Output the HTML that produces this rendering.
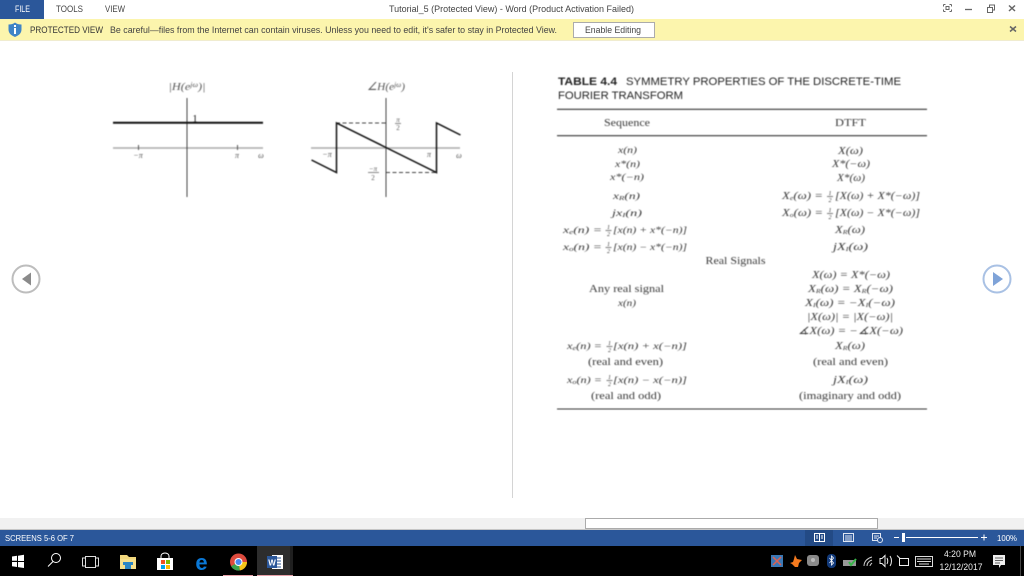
<!DOCTYPE html>
<html><head><meta charset="utf-8"><style>
html,body{margin:0;padding:0;width:1024px;height:576px;overflow:hidden;background:#fff}
svg{display:block;position:absolute;left:0;top:0}
text{font-family:"Liberation Sans",sans-serif}
.ui{font-size:9px;fill:#444}
.w{fill:#fff;font-size:8px}
.doc text{font-family:"Liberation Serif",serif;fill:#383838}
.doc{filter:blur(.5px)}
.m{font-style:italic;font-size:9px}
.r{font-size:11px}
.f{font-size:6px;text-anchor:middle;font-style:italic}
.dg text{font-family:"Liberation Serif",serif;fill:#555}
.dg{filter:blur(.4px)}
</style></head><body>
<svg width="1024" height="576" viewBox="0 0 1024 576" xmlns="http://www.w3.org/2000/svg">
<rect width="1024" height="576" fill="#fff"/>
<rect x="0" y="0" width="44" height="19" fill="#2b579a"/>
<text x="15" y="12" class="ui" style="fill:#fff" textLength="15" lengthAdjust="spacingAndGlyphs">FILE</text>
<text x="56" y="12" class="ui" textLength="27" lengthAdjust="spacingAndGlyphs">TOOLS</text>
<text x="105" y="12" class="ui" textLength="20" lengthAdjust="spacingAndGlyphs">VIEW</text>
<text x="389" y="12" class="ui" textLength="245" lengthAdjust="spacingAndGlyphs">Tutorial_5 (Protected View) - Word (Product Activation Failed)</text>
<g stroke="#666" fill="none">
<path d="M943.500 4.500v2M943.500 4.500h2M951.500 4.500h-2M951.500 4.500v2M943.500 11.500h2M943.500 11.500v-2M951.500 11.500h-2M951.500 11.500v-2M946 6.500h3v3h-3z"/>
<path d="M965 9.500h7" stroke-width="1.300"/>
<path d="M987.500 7.500h5v5h-5zM989.500 7.500v-2.500h5v5h-2"/>
<path d="M1009 5.500l6 5.500M1015 5.500l-6 5.500" stroke-width="1.500"/>
</g>
<rect x="0" y="19" width="1024" height="21" fill="#fcf5ad"/>
<rect x="0" y="40" width="1024" height="1" fill="#f0ecd0"/>
<path d="M15 22.500c2 1.500 4 2 6.500 2v5c0 4-3 6-6.500 7.500-3.500-1.500-6.500-3.500-6.500-7.500v-5c2.500 0 4.500-.5 6.500-2z" fill="#3f84c6"/>
<rect x="14" y="28" width="2" height="6" fill="#fff"/><rect x="14" y="25" width="2" height="2" fill="#fff"/>
<text x="30" y="33" class="ui" style="fill:#333" textLength="73" lengthAdjust="spacingAndGlyphs">PROTECTED VIEW</text>
<text x="110" y="33" class="ui" style="fill:#444" textLength="447" lengthAdjust="spacingAndGlyphs">Be careful—files from the Internet can contain viruses. Unless you need to edit, it's safer to stay in Protected View.</text>
<rect x="573.500" y="22.500" width="81" height="15" fill="#fff" stroke="#ababab"/>
<text x="585" y="33" class="ui" textLength="56" lengthAdjust="spacingAndGlyphs">Enable Editing</text>
<path d="M1010 26.500l6 5M1016 26.500l-6 5" stroke="#666" stroke-width="1.500"/>

<rect x="512" y="72" width="1" height="426" fill="#d4d4d4"/>

<g class="dg">
<text x="187" y="90" text-anchor="middle" font-size="11" font-style="italic" textLength="37" lengthAdjust="spacingAndGlyphs">|H(e<tspan font-size="7" dy="-3">jω</tspan><tspan dy="3">)|</tspan></text>
<path d="M113 148h150" stroke="#aaa" stroke-width="1.500"/>
<path d="M187 98v99" stroke="#444" stroke-width="1"/>
<path d="M113 122.700h150" stroke="#111" stroke-width="2"/>
<path d="M138.500 145v5M237.500 145v5" stroke="#555"/>
<text x="195" y="122" font-size="11" text-anchor="middle" style="fill:#222">1</text>
<text x="138" y="158" font-size="8" text-anchor="middle" font-style="italic">−π</text>
<text x="237" y="158" font-size="8" text-anchor="middle" font-style="italic">π</text>
<text x="261" y="158" font-size="8" text-anchor="middle" font-style="italic">ω</text>

<text x="386" y="90" text-anchor="middle" font-size="11" font-style="italic" textLength="38" lengthAdjust="spacingAndGlyphs">∠H(e<tspan font-size="7" dy="-3">jω</tspan><tspan dy="3">)</tspan></text>
<path d="M311 148h149" stroke="#aaa" stroke-width="1.500"/>
<path d="M386 98v99" stroke="#444" stroke-width="1"/>
<path d="M336 123h50M386 172.500h50" stroke="#444" stroke-dasharray="4 2.500" fill="none"/>
<path d="M311.500 160l25 12.500v-49.500l100 49.500v-49.500l24 12" stroke="#111" stroke-width="1.500" fill="none"/>
<text x="327" y="157" font-size="8" text-anchor="middle" font-style="italic">−π</text>
<text x="429" y="157" font-size="8" text-anchor="middle" font-style="italic">π</text>
<text x="459" y="158" font-size="8" text-anchor="middle" font-style="italic">ω</text>
<text x="398" y="122" font-size="7" text-anchor="middle" font-style="italic">π</text>
<path d="M395 123.500h6" stroke="#555" stroke-width=".7"/>
<text x="398" y="130" font-size="7" text-anchor="middle">2</text>
<text x="373" y="171" font-size="7" text-anchor="middle" font-style="italic">−π</text>
<path d="M368 172.500h11" stroke="#555" stroke-width=".7"/>
<text x="373" y="180" font-size="7" text-anchor="middle">2</text>
</g>

<g class="doc">
<text x="558" y="85" style="font-family:'Liberation Sans',sans-serif;font-size:11px;fill:#222;font-weight:bold" textLength="59" lengthAdjust="spacingAndGlyphs">TABLE 4.4</text>
<text x="626" y="85" style="font-family:'Liberation Sans',sans-serif;font-size:11px;fill:#222" textLength="275" lengthAdjust="spacingAndGlyphs">SYMMETRY PROPERTIES OF THE DISCRETE-TIME</text>
<text x="558" y="99" style="font-family:'Liberation Sans',sans-serif;font-size:11px;fill:#222" textLength="125" lengthAdjust="spacingAndGlyphs">FOURIER TRANSFORM</text>
<path d="M557 109.300h370M557 135.700h370M557 409h370" stroke="#333" stroke-width="1.100" fill="none"/>
<text x="604" y="126" class="r" textLength="46" lengthAdjust="spacingAndGlyphs">Sequence</text>
<text x="835" y="126" class="r" textLength="31" lengthAdjust="spacingAndGlyphs">DTFT</text>

<text x="618" y="153" class="m" textLength="19" lengthAdjust="spacingAndGlyphs">x(n)</text>
<text x="615" y="167" class="m" textLength="25" lengthAdjust="spacingAndGlyphs">x*(n)</text>
<text x="610" y="180" class="m" textLength="34" lengthAdjust="spacingAndGlyphs">x*(−n)</text>
<text x="613" y="199" class="m" textLength="27" lengthAdjust="spacingAndGlyphs">x<tspan font-size="6" dy="1">R</tspan><tspan dy="-1">(n)</tspan></text>
<text x="612" y="216" class="m" textLength="30" lengthAdjust="spacingAndGlyphs">jx<tspan font-size="6" dy="1">I</tspan><tspan dy="-1">(n)</tspan></text>

<text x="563" y="233" class="m" textLength="39" lengthAdjust="spacingAndGlyphs">x<tspan font-size="6" dy="1">e</tspan><tspan dy="-1">(n) =</tspan></text>
<text x="608.500" y="229" class="f">1</text><path d="M605.500 230.500h6" stroke="#444" stroke-width=".7"/><text x="608.500" y="236" class="f">2</text>
<text x="613" y="233" class="m" textLength="74" lengthAdjust="spacingAndGlyphs">[x(n) + x*(−n)]</text>

<text x="563" y="250" class="m" textLength="39" lengthAdjust="spacingAndGlyphs">x<tspan font-size="6" dy="1">o</tspan><tspan dy="-1">(n) =</tspan></text>
<text x="608.500" y="246" class="f">1</text><path d="M605.500 247.500h6" stroke="#444" stroke-width=".7"/><text x="608.500" y="253" class="f">2</text>
<text x="613" y="250" class="m" textLength="74" lengthAdjust="spacingAndGlyphs">[x(n) − x*(−n)]</text>

<text x="838" y="154" class="m" style="font-size:10px" textLength="25" lengthAdjust="spacingAndGlyphs">X(ω)</text>
<text x="832" y="167" class="m" style="font-size:10px" textLength="38" lengthAdjust="spacingAndGlyphs">X*(−ω)</text>
<text x="837" y="181" class="m" style="font-size:10px" textLength="28" lengthAdjust="spacingAndGlyphs">X*(ω)</text>

<text x="782" y="199" class="m" style="font-size:10px" textLength="41" lengthAdjust="spacingAndGlyphs">X<tspan font-size="6" dy="1">e</tspan><tspan dy="-1">(ω) =</tspan></text>
<text x="830" y="195" class="f">1</text><path d="M827 196.500h6" stroke="#444" stroke-width=".7"/><text x="830" y="202" class="f">2</text>
<text x="835" y="199" class="m" style="font-size:10px" textLength="85" lengthAdjust="spacingAndGlyphs">[X(ω) + X*(−ω)]</text>

<text x="782" y="216" class="m" style="font-size:10px" textLength="41" lengthAdjust="spacingAndGlyphs">X<tspan font-size="6" dy="1">o</tspan><tspan dy="-1">(ω) =</tspan></text>
<text x="830" y="212" class="f">1</text><path d="M827 213.500h6" stroke="#444" stroke-width=".7"/><text x="830" y="219" class="f">2</text>
<text x="835" y="216" class="m" style="font-size:10px" textLength="85" lengthAdjust="spacingAndGlyphs">[X(ω) − X*(−ω)]</text>

<text x="835" y="233" class="m" style="font-size:10px" textLength="30" lengthAdjust="spacingAndGlyphs">X<tspan font-size="6" dy="1">R</tspan><tspan dy="-1">(ω)</tspan></text>
<text x="833" y="250" class="m" style="font-size:10px" textLength="35" lengthAdjust="spacingAndGlyphs">jX<tspan font-size="6" dy="1">I</tspan><tspan dy="-1">(ω)</tspan></text>

<text x="705.500" y="264" class="r" textLength="60" lengthAdjust="spacingAndGlyphs">Real Signals</text>

<text x="812" y="278" class="m" style="font-size:10px" textLength="78" lengthAdjust="spacingAndGlyphs">X(ω) = X*(−ω)</text>
<text x="808" y="292" class="m" style="font-size:10px" textLength="85" lengthAdjust="spacingAndGlyphs">X<tspan font-size="6" dy="1">R</tspan><tspan dy="-1">(ω) = X</tspan><tspan font-size="6" dy="1">R</tspan><tspan dy="-1">(−ω)</tspan></text>
<text x="805" y="306" class="m" style="font-size:10px" textLength="90" lengthAdjust="spacingAndGlyphs">X<tspan font-size="6" dy="1">I</tspan><tspan dy="-1">(ω) = −X</tspan><tspan font-size="6" dy="1">I</tspan><tspan dy="-1">(−ω)</tspan></text>
<text x="807" y="320" class="m" style="font-size:10px" textLength="86" lengthAdjust="spacingAndGlyphs">|X(ω)| = |X(−ω)|</text>
<text x="798" y="334" class="m" style="font-size:10px" textLength="105" lengthAdjust="spacingAndGlyphs">∡X(ω) = −∡X(−ω)</text>
<text x="835" y="349" class="m" style="font-size:10px" textLength="30" lengthAdjust="spacingAndGlyphs">X<tspan font-size="6" dy="1">R</tspan><tspan dy="-1">(ω)</tspan></text>
<text x="813" y="365" class="r" textLength="75" lengthAdjust="spacingAndGlyphs">(real and even)</text>
<text x="833" y="383" class="m" style="font-size:10px" textLength="35" lengthAdjust="spacingAndGlyphs">jX<tspan font-size="6" dy="1">I</tspan><tspan dy="-1">(ω)</tspan></text>
<text x="799" y="399" class="r" textLength="102" lengthAdjust="spacingAndGlyphs">(imaginary and odd)</text>

<text x="589" y="292" class="r" textLength="75" lengthAdjust="spacingAndGlyphs">Any real signal</text>
<text x="618" y="306" class="m" textLength="18" lengthAdjust="spacingAndGlyphs">x(n)</text>

<text x="567" y="349" class="m" textLength="35" lengthAdjust="spacingAndGlyphs">x<tspan font-size="6" dy="1">e</tspan><tspan dy="-1">(n) =</tspan></text>
<text x="609.500" y="345" class="f">1</text><path d="M606.500 346.500h6" stroke="#444" stroke-width=".7"/><text x="609.500" y="352" class="f">2</text>
<text x="613" y="349" class="m" textLength="74" lengthAdjust="spacingAndGlyphs">[x(n) + x(−n)]</text>

<text x="588" y="365" class="r" textLength="75" lengthAdjust="spacingAndGlyphs">(real and even)</text>

<text x="567" y="383" class="m" textLength="35" lengthAdjust="spacingAndGlyphs">x<tspan font-size="6" dy="1">o</tspan><tspan dy="-1">(n) =</tspan></text>
<text x="609.500" y="379" class="f">1</text><path d="M606.500 380.500h6" stroke="#444" stroke-width=".7"/><text x="609.500" y="386" class="f">2</text>
<text x="613" y="383" class="m" textLength="74" lengthAdjust="spacingAndGlyphs">[x(n) − x(−n)]</text>

<text x="591" y="399" class="r" textLength="70" lengthAdjust="spacingAndGlyphs">(real and odd)</text>
</g>

<circle cx="26" cy="279" r="13.500" fill="#fff" stroke="#bdbdbd" stroke-width="2"/>
<path d="M31 272.500v13l-9-6.500z" fill="#8a8a8a"/>
<circle cx="997" cy="279" r="13.500" fill="#fff" stroke="#a9c1e4" stroke-width="2"/>
<path d="M993 272v14l10-7z" fill="#7fa3d8"/>

<rect x="0" y="518" width="1024" height="11" fill="#f1f1f1"/>
<rect x="585.500" y="518.500" width="292" height="10" fill="#fff" stroke="#ababab"/>
<rect x="0" y="529" width="1024" height="1" fill="#c6c6c6"/>
<rect x="0" y="530" width="1024" height="16" fill="#2b579a"/>
<rect x="805" y="530" width="28" height="16" fill="#234a85"/>
<text x="5" y="541" class="w" textLength="69" lengthAdjust="spacingAndGlyphs">SCREENS 5-6 OF 7</text>
<g stroke="#fff" fill="none" stroke-width="1">
<path d="M814.500 533.500h10v8h-10zM819.500 533.500v8M816 536h2M816 538h2M821 536h2M821 538h2"/>
<path d="M843.500 533.500h10v8h-10zM845 536h7M845 538h7M845 540h7" stroke="#dfe6f2"/>
<path d="M872.500 533.500h8v7h-8zM874 536h5M874 538h3" stroke="#dfe6f2"/>
<circle cx="880" cy="540" r="2.500" fill="#2b579a" stroke="#dfe6f2"/>
<path d="M894 537.500h5M906 537.500h72M981 537.500h6M984 534.500v6"/>
</g>
<rect x="902" y="533" width="3" height="9" fill="#fff"/>
<text x="997" y="541" class="w" textLength="20" lengthAdjust="spacingAndGlyphs">100%</text>

<rect x="0" y="546" width="1024" height="30" fill="#000"/>
<rect x="257" y="546" width="33" height="30" fill="#2d2d2d"/>
<rect x="290" y="546" width="3" height="30" fill="#1f1f1f"/>
<rect x="223" y="575" width="30" height="1" fill="#e8a0a8"/>
<rect x="257" y="575" width="36" height="1" fill="#e8a0a8"/>
<path d="M12 556.500l5-.7v5h-5zM18 555.700l6-.9v6.200h-6zM12 562h5v5l-5-.7zM18 562h6v6l-6-.9z" fill="#fff"/>
<g stroke="#fff" fill="none">
<circle cx="56" cy="558" r="4.500"/><path d="M53 561.500l-5 5"/>
<path d="M85.500 556.500h10v11h-10zM85.500 558h-3v8h3M95.500 558h3v8h-3" stroke="#ddd"/>
</g>
<path d="M120 555h7l2 2h7v12h-16z" fill="#f1d77c"/><path d="M120 559h16v10h-16z" fill="#f6e08c"/>
<path d="M123 562h10v3h-2v4h-6v-4h-2z" fill="#2b86c5"/>
<path d="M157 558h16v12h-16z" fill="#fff"/><path d="M161 558v-2a4 3 0 0 1 8 0v2" fill="none" stroke="#fff"/>
<rect x="161" y="560" width="4" height="4" fill="#f25022"/><rect x="166" y="560" width="4" height="4" fill="#7fba00"/><rect x="161" y="565" width="4" height="4" fill="#00a4ef"/><rect x="166" y="565" width="4" height="4" fill="#ffb900"/>
<text x="201.500" y="570" text-anchor="middle" style="font-size:22px;font-weight:bold;fill:#0a78d7">e</text>
<circle cx="238.500" cy="562" r="8.500" fill="#dd4b3e"/>
<path d="M238.500 562L231 566.300A8.500 8.500 0 0 0 240 570.400z" fill="#3ba34f"/>
<path d="M238.500 562L247 562A8.500 8.500 0 0 1 240 570.400z" fill="#f5c518"/>
<circle cx="238.500" cy="562" r="4" fill="#fff"/><circle cx="238.500" cy="562" r="3" fill="#4a8af4"/>
<rect x="272" y="555" width="11" height="14" fill="#fff"/>
<path d="M274 558h7M274 561h7M274 564h7M274 567h7" stroke="#2b579a"/>
<rect x="267" y="556" width="10" height="12" fill="#2b579a"/>
<text x="272" y="565.500" text-anchor="middle" style="font-size:8px;font-weight:bold;fill:#fff">W</text>

<rect x="771" y="555" width="12" height="12" fill="#3a78b5"/>
<path d="M773 557l8 8M781 557l-8 8" stroke="#e06050" stroke-width="1.500"/>
<path d="M795 555l2 4 5 1-3 3-1 4h-3l-3-3-2-1 3-1 1-3z" fill="#f47a1f"/>
<rect x="807" y="555" width="12" height="11" rx="3" fill="#8a8a8a"/><circle cx="813" cy="560" r="2" fill="#bbb"/>
<rect x="827" y="554" width="9" height="14" rx="4" fill="#123a7a"/>
<path d="M829.500 558l4 5-2 2v-9l2 2-4 5" stroke="#fff" fill="none" stroke-width=".8"/>
<rect x="843" y="560" width="13" height="6" fill="#999"/>
<path d="M849 562l2 3 5-6" stroke="#39b54a" fill="none" stroke-width="2"/>
<g stroke="#ccc" fill="none">
<path d="M864 566c0-5 4-8 8-9M867 566c0-3 2-5 5-6M870 566c0-1 1-2 2-3"/>
<path d="M880 558.500h2l3-3v11l-3-3h-2zM887 558c1 2 1 4 0 6M890 556c2 3 2 7 0 10" stroke="#eee"/>
<path d="M899.500 558.500h9v7h-9zM897 555.500l3 3" stroke="#eee"/>
<path d="M915.500 556.500h17v10h-17zM917 559h14M917 561.500h14M919 564h10" stroke="#ddd"/>
</g>
<text x="960" y="557" text-anchor="middle" style="font-size:9px;fill:#eee" textLength="32" lengthAdjust="spacingAndGlyphs">4:20 PM</text>
<text x="961" y="570" text-anchor="middle" style="font-size:9px;fill:#eee" textLength="43" lengthAdjust="spacingAndGlyphs">12/12/2017</text>
<path d="M993 555h12v10h-4l-2 3v-3h-6z" fill="#eee"/>
<path d="M995 558h8M995 560.500h8M995 563h5" stroke="#333" stroke-width=".8"/>
<rect x="1020" y="546" width="1" height="30" fill="#444"/>
</svg>
</body></html>
